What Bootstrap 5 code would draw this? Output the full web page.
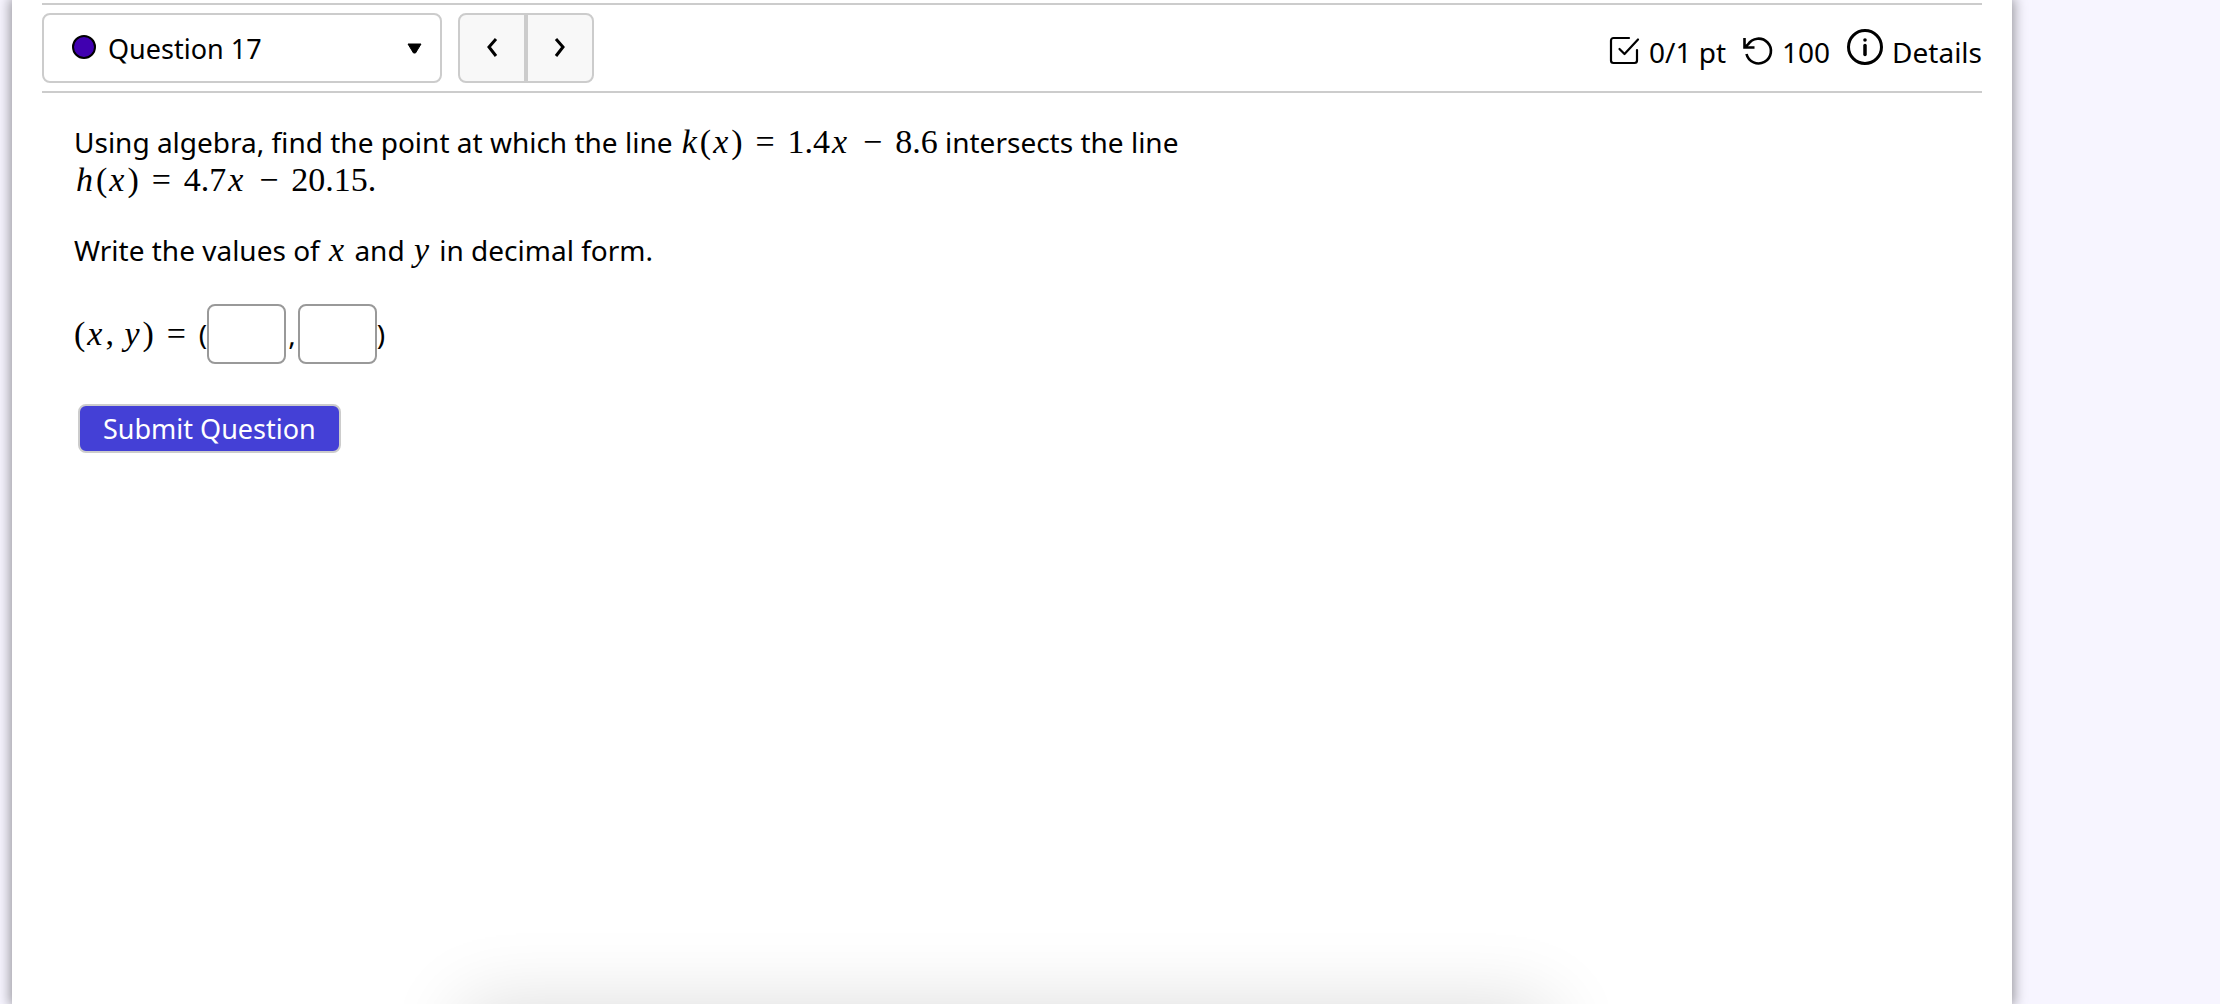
<!DOCTYPE html>
<html lang="en">
<head>
<meta charset="utf-8">
<meta name="viewport" content="width=device-width, initial-scale=1">
<title>Question 17</title>
<link href="https://cdn.jsdelivr.net/npm/bootstrap@5.3.0/dist/css/bootstrap.min.css" rel="stylesheet">
<style>
body { background: #f7f5ff; color: #000; font-family: "Noto Sans", "Open Sans", sans-serif; font-size: 28px; line-height: 38px; overflow-x: hidden; }
.sheet { margin: 0 208px 0 12px; padding: 3px 30px 0; background: #fff; box-shadow: 0 0 12px 2px rgba(0,0,0,.4); }
.tool-row { border-top: 2px solid #ccc; border-bottom: 2px solid #ccc; padding: 8px 0; }
.picker { width: 400px; }
.picker select { height: 70px; padding: 2px 48px 0 64px; border: 2px solid #ccc; border-radius: 8px; background: #fff; color: #000; appearance: none; font-size: 27px; }
.picker svg { pointer-events: none; top: 22px; }
.picker .dot { left: 30px; }
.picker .caret { right: 20px; }
.step { width: 68px; height: 70px; border: 2px solid #ccc; background: #f8f8f8; }
.step:first-child { border-radius: 8px 0 0 8px; }
.step:last-child { border-radius: 0 8px 8px 0; }
.status { padding-top: 8px; }
.status a { color: #000; }
.problem { padding: 30px 32px 0; max-width: 1200px; }
.problem p { margin-bottom: 32px; }
.eq { font-family: "Liberation Serif", serif; font-size: 34px; line-height: 34px; white-space: nowrap; }
.eq i { margin: 0 3px 0 2px; }
.op { display: inline-block; width: 45px; text-align: center; }
.answer { margin: 35px 0 40px; }
.answer .comma { padding: 0 2px; }
.blank { width: 79px; height: 60px; border: 2px solid #999; border-radius: 8px; padding: 0 8px; }
.send { margin-left: 4px; padding: 4px 23px 3px; border: 2px solid #ccc; border-radius: 8px; background: #4440d6; color: #fff; font-size: 27px; }
.glow { left: 0; right: 208px; bottom: 0; height: 100px; overflow: hidden; pointer-events: none; }
.glow::after { content: ""; position: absolute; top: 100%; left: 23%; right: 23%; height: 300px; box-shadow: 0 0 72px rgba(0,0,0,.14); }
</style>
</head>
<body>
<main class="sheet min-vh-100">
  <header class="tool-row d-flex align-items-center justify-content-between">
    <div class="d-flex">
      <div class="picker position-relative me-3">
        <select class="w-100" aria-label="Question"><option>Question 17</option></select>
        <svg class="dot position-absolute" width="24" height="24" viewBox="0 0 24 24"><circle cx="12" cy="12" r="11" fill="#4000b0" stroke="#000" stroke-width="2"/></svg>
        <svg class="caret position-absolute" width="15" height="24" viewBox="0 0 15 24"><path d="M1 9h13L8.500 18h-2z" stroke="#000" stroke-linejoin="round"/></svg>
      </div>
      <nav class="d-flex" aria-label="Question navigation">
        <button type="button" class="step d-flex align-items-center justify-content-center" aria-label="Previous"><svg width="14" height="22" viewBox="0 0 14 22" fill="none" stroke="#000" stroke-width="3"><path d="M11 2L4 10l7 9"/></svg></button>
        <button type="button" class="step d-flex align-items-center justify-content-center" aria-label="Next"><svg width="14" height="22" viewBox="0 0 14 22" fill="none" stroke="#000" stroke-width="3"><path d="M3 2l7 8-7 9"/></svg></button>
      </nav>
    </div>
    <div class="status d-flex align-items-center">
      <svg class="me-2" width="32" height="32" viewBox="0 0 32 32" fill="none" stroke="#000" stroke-width="2.200" stroke-linecap="round" stroke-linejoin="round"><path d="M20 2H4.500A2.500 2.500 0 0 0 2 4.500v20A2.500 2.500 0 0 0 4.500 27h21a2.500 2.500 0 0 0 2.500-2.500V14M10.500 13l5 5L29 3.500"/></svg>
      <span class="me-3">0/1 pt</span>
      <svg class="me-2" width="32" height="32" viewBox="0 0 32 32" fill="none" stroke="#000" stroke-width="2.600"><path d="M4.500 18A12.400 12.400 0 1 0 6 8.500L2.500 11.500M2.500 2v9.500h10"/></svg>
      <span class="me-3">100</span>
      <a href="#" class="d-flex align-items-center text-decoration-none">
        <svg class="me-2" width="38" height="46" viewBox="0 0 38 46" fill="none" stroke="#000" stroke-width="3"><circle cx="19" cy="18" r="16.500"/><path d="M19 16.500v9" stroke-width="3.500" stroke-linecap="round"/><circle cx="19" cy="11" r="1.800" fill="#000" stroke="none"/></svg>
        Details</a>
    </div>
  </header>
  <form class="problem">
    <p>Using algebra, find the point at which the line <span class="eq"><i>k</i>(<i>x</i>)<span class="op">=</span>1.4<i>x</i><span class="op">−</span>8.6</span> intersects the line <span class="eq"><i>h</i>(<i>x</i>)<span class="op">=</span>4.7<i>x</i><span class="op">−</span>20.15.</span></p>
    <p>Write the values of <span class="eq"><i>x</i></span> and <span class="eq"><i>y</i></span> in decimal form.</p>
    <div class="answer d-flex align-items-center">
      <span class="eq">(<i>x</i>, <i>y</i>)<span class="op">=</span></span>(<input class="blank" type="text" aria-label="x value"><span class="comma">,</span><input class="blank" type="text" aria-label="y value">)
    </div>
    <button type="submit" class="send">Submit Question</button>
  </form>
</main>
<div class="glow position-fixed"></div>
<script src="https://cdn.jsdelivr.net/npm/bootstrap@5.3.0/dist/js/bootstrap.bundle.min.js"></script>
</body>
</html>
